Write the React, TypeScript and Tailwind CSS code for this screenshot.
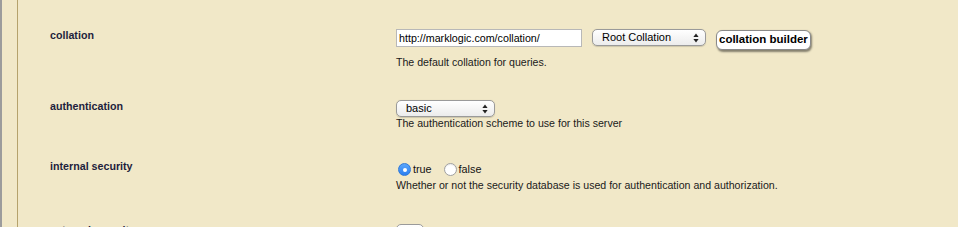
import React from 'react';

const font = { fontFamily: '"Liberation Sans", Arial, Helvetica, sans-serif' };

function Arrows() {
  return (
    <svg width="6" height="10" viewBox="0 0 6 10" className="shrink-0">
      <path d="M3 0.5 L5.6 4 H0.4 Z" fill="#222" />
      <path d="M3 9.5 L5.6 6 H0.4 Z" fill="#222" />
    </svg>
  );
}

function FakeSelect({ label, className }: { label: string; className: string }) {
  return (
    <div
      className={`flex items-center justify-between h-[17px] pl-[9px] pr-[6px] rounded-[5px] border border-[#9a9a9a] bg-gradient-to-b from-white to-[#ececec] text-[11px] text-black shadow-[0_0.5px_1px_rgba(0,0,0,0.15)] ${className}`}
    >
      <span className="leading-none">{label}</span>
      <Arrows />
    </div>
  );
}

function Radio({ checked, label }: { checked: boolean; label: string }) {
  return (
    <label className="flex items-center gap-[2px] text-[10.8px] text-[#111]">
      {checked ? (
        <span className="flex items-center justify-center w-[13px] h-[13px] rounded-full bg-gradient-to-b from-[#5aa6fb] to-[#2a7ef0] border border-[#2f78d8]">
          <span className="w-[4px] h-[4px] rounded-full bg-white" />
        </span>
      ) : (
        <span className="w-[13px] h-[13px] rounded-full bg-white border border-[#a0a0a0] shadow-[inset_0_1px_1px_rgba(0,0,0,0.08)]" />
      )}
      <span className="leading-none">{label}</span>
    </label>
  );
}

function Row({ label, height, children }: { label: string; height: string; children: React.ReactNode }) {
  return (
    <div className={`flex items-start ${height}`}>
      <div className="w-[378px] pl-[32px] text-[10.7px] font-bold text-[#1e1e3c] leading-[13px] shrink-0">
        {label}
      </div>
      <div className="flex flex-col">{children}</div>
    </div>
  );
}

export default function App() {
  return (
    <div className="w-[958px] h-[227px] overflow-hidden bg-[#f1e8c8] flex" style={font}>
      <div className="w-[2px] bg-[#9c9c9c] shrink-0" />
      <div className="w-[15px] shrink-0" />
      <div className="w-[1px] bg-[#b5a26c] shrink-0" />
      <div className="flex-1 pt-[29px]">
        <Row label="collation" height="h-[71px]">
          <div className="flex items-start">
            <div className="w-[186px] h-[18px] border border-[#b8b8b8] bg-white flex items-center pl-[2px] text-[10.7px] text-black">
              http://marklogic.com/collation/
            </div>
            <FakeSelect label="Root Collation" className="ml-[10px] w-[114px]" />
            <button className="ml-[10px] mt-[1px] h-[20px] px-[2px] rounded-[6px] border border-[#8a8a8a] bg-white text-[11.5px] font-bold text-black leading-none shadow-[1px_1.5px_2px_rgba(0,0,0,0.45)]">
              collation builder
            </button>
          </div>
          <div className="mt-[6px] text-[10.6px] text-[#1a1a1a] leading-[13px]">
            The default collation for queries.
          </div>
        </Row>
        <Row label="authentication" height="h-[60px]">
          <FakeSelect label="basic" className="w-[99px]" />
          <div className="text-[10.6px] text-[#1a1a1a] leading-[13px]">
            The authentication scheme to use for this server
          </div>
        </Row>
        <Row label="internal security" height="h-[64px]">
          <div className="flex items-center gap-[12px] ml-[2px] mt-[3px]">
            <Radio checked label="true" />
            <Radio checked={false} label="false" />
          </div>
          <div className="mt-[3px] text-[10.6px] text-[#1a1a1a] leading-[13px]">
            Whether or not the security database is used for authentication and authorization.
          </div>
        </Row>
        <Row label="external security" height="h-[40px]">
          <div className="w-[28px] h-[17px] rounded-[5px] border border-[#9a9a9a] bg-gradient-to-b from-white to-[#ececec]" />
        </Row>
      </div>
    </div>
  );
}
